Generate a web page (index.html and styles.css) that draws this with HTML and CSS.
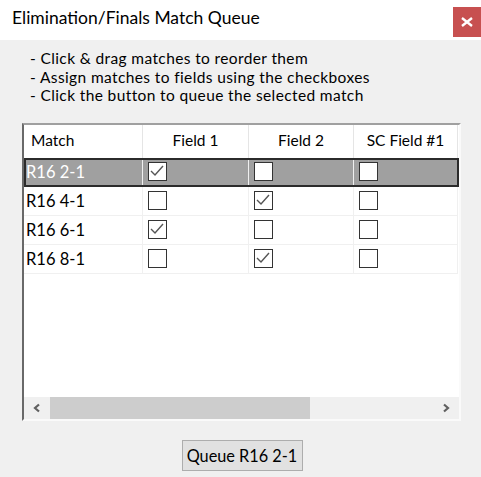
FILE: index.html
```html
<!DOCTYPE html>
<html>
<head>
<meta charset="utf-8">
<link rel="stylesheet" href="styles.css">
</head>
<body>
<div class="window">
  <div class="titlebar">
    <div class="title">Elimination/Finals Match Queue</div>
    <div class="close">
      <svg width="12" height="10" viewBox="0 0 12 10"><path d="M1 1 L11 9 M11 1 L1 9" stroke="#fff" stroke-width="2.4"/></svg>
    </div>
  </div>
  <div class="content">
    <div class="help">
      <div>- Click &amp; drag matches to reorder them</div>
      <div>- Assign matches to fields using the checkboxes</div>
      <div>- Click the button to queue the selected match</div>
    </div>
    <div class="listview">
      <div class="header">
        <div class="hcell left c1">Match</div>
        <div class="hcell c2">Field 1</div>
        <div class="hcell c3">Field 2</div>
        <div class="hcell c4">SC Field #1</div>
      </div>
      <div class="row selected">
        <div class="cell c1">R16 2-1</div>
        <div class="cell c2"><span class="cb checked"></span></div>
        <div class="cell c3"><span class="cb"></span></div>
        <div class="cell c4"><span class="cb"></span></div>
      </div>
      <div class="row">
        <div class="cell c1">R16 4-1</div>
        <div class="cell c2"><span class="cb"></span></div>
        <div class="cell c3"><span class="cb checked"></span></div>
        <div class="cell c4"><span class="cb"></span></div>
      </div>
      <div class="row">
        <div class="cell c1">R16 6-1</div>
        <div class="cell c2"><span class="cb checked"></span></div>
        <div class="cell c3"><span class="cb"></span></div>
        <div class="cell c4"><span class="cb"></span></div>
      </div>
      <div class="row">
        <div class="cell c1">R16 8-1</div>
        <div class="cell c2"><span class="cb"></span></div>
        <div class="cell c3"><span class="cb checked"></span></div>
        <div class="cell c4"><span class="cb"></span></div>
      </div>
      <div class="filler"></div>
      <div class="hscroll">
        <div class="arrow">
          <svg width="10" height="10" viewBox="0 0 10 10"><path d="M7 1.5 L3 5 L7 8.5" fill="none" stroke="#606060" stroke-width="2.2"/></svg>
        </div>
        <div class="track"><div class="thumb"></div></div>
        <div class="arrow">
          <svg width="10" height="10" viewBox="0 0 10 10"><path d="M3 1.5 L7 5 L3 8.5" fill="none" stroke="#606060" stroke-width="2.2"/></svg>
        </div>
      </div>
    </div>
    <div class="actions">
      <button class="btn">Queue R16 2-1</button>
    </div>
  </div>
</div>
</body>
</html>
```
FILE: styles.css
```css
html, body {
  margin: 0;
  padding: 0;
}
body {
  width: 481px;
  height: 477px;
  background: #f0f0f0;
  font-family: Lato, "Noto Sans", sans-serif;
  font-size: 15.5px;
  color: #000;
  overflow: hidden;
}
.window {
  display: flex;
  flex-direction: column;
  height: 477px;
}
.titlebar {
  height: 40px;
  background: #fff;
  display: flex;
  justify-content: space-between;
  align-items: flex-start;
}
.title {
  font-size: 17.5px;
  padding-left: 12px;
  line-height: 22px;
  padding-top: 7px;
}
.close {
  margin-top: 7px;
  width: 28px;
  height: 30px;
  background: #c75050;
  display: flex;
  align-items: center;
  justify-content: center;
}
.content {
  flex: 1;
  display: flex;
  flex-direction: column;
}
.help {
  padding: 9px 0 0 30px;
  line-height: 18.6px;
  font-size: 15.5px;
  letter-spacing: 0.38px;
  color: #000;
}
.listview {
  margin: 18px 0 0 22px;
  width: 439px;
  height: 298px;
  box-sizing: border-box;
  border-top: 2px solid #a0a0a0;
  border-left: 2px solid #696969;
  border-right: 2px solid #fafafa;
  border-bottom: 2px solid #fafafa;
  background: #fff;
  display: flex;
  flex-direction: column;
}
.header, .row {
  display: flex;
}
.header {
  height: 33px;
}
.row {
  height: 29px;
  box-sizing: border-box;
}
.c1 { width: 119px; }
.c2 { width: 106px; }
.c3 { width: 105px; }
.c4 { width: 104px; }
.hcell {
  box-sizing: border-box;
  border-right: 1px solid #e5e5e5;
  display: flex;
  align-items: center;
  justify-content: center;
  padding-bottom: 2px;
}
.hcell.left {
  justify-content: flex-start;
  padding-left: 7px;
}
.cell {
  box-sizing: border-box;
  border-right: 1px solid #f0f0f0;
  border-bottom: 1px solid #f0f0f0;
  display: flex;
  align-items: center;
  padding-left: 5px;
}
.cell.c1 {
  padding-left: 2px;
  font-size: 16.5px;
}
.row.selected {
  background: #a0a0a0;
  outline: 2px solid #2b2b2b;
  outline-offset: -2px;
}
.row.selected .cell {
  color: #fff;
  border-bottom-color: transparent;
}
.cb {
  width: 19px;
  height: 19px;
  box-sizing: border-box;
  border: 1px solid #333;
  background: #fff;
  display: block;
}
.cb.checked {
  background: #fff url("data:image/svg+xml;utf8,<svg xmlns='http://www.w3.org/2000/svg' width='17' height='17' viewBox='0 0 17 17'><path d='M2 8 L6 12 L14 3' fill='none' stroke='%23555' stroke-width='1.4'/></svg>") no-repeat center;
}
.filler {
  flex: 1;
}
.hscroll {
  height: 22px;
  display: flex;
  background: #f0f0f0;
}
.arrow {
  width: 26px;
  display: flex;
  align-items: center;
  justify-content: center;
}
.track {
  flex: 1;
  display: flex;
}
.thumb {
  width: 260px;
  background: #cdcdcd;
}
.actions {
  display: flex;
  justify-content: center;
  padding-top: 19px;
}
.btn {
  margin-left: 3px;
  width: 121px;
  height: 31px;
  background: #e1e1e1;
  border: 1px solid #adadad;
  font-family: Lato, "Noto Sans", sans-serif;
  font-size: 16.3px;
  color: #000;
  padding: 0;
}
```
